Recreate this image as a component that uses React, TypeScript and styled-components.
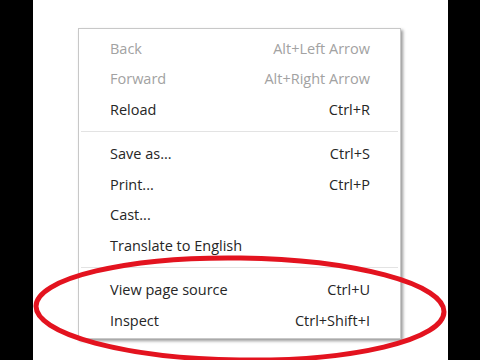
import styled, { createGlobalStyle } from "styled-components";

const GlobalStyle = createGlobalStyle`
  html, body {
    margin: 0;
    padding: 0;
    background: #000;
  }
  body {
    font-family: "Open Sans", "Noto Sans", Arial, sans-serif;
  }
`;

const Frame = styled.div`
  display: flex;
  width: 480px;
  height: 360px;
  background: #000;
`;

const Screen = styled.div`
  position: relative;
  margin-left: 33px;
  width: 415px;
  height: 360px;
  background: #fff;
  overflow: hidden;
`;

const Menu = styled.div`
  margin: 28px 0 0 45px;
  width: 321px;
  padding: 4px 0 2px;
  background: #fff;
  border: 1px solid #c8c8c8;
  box-shadow: 2px 2px 3px rgba(0, 0, 0, 0.4);
  display: flex;
  flex-direction: column;
`;

const Row = styled.div<{ $disabled?: boolean }>`
  display: flex;
  align-items: center;
  justify-content: space-between;
  height: 30.5px;
  padding: 0 30px 0 31px;
  font-size: 14.5px;
  color: ${(p) => (p.$disabled ? "#a2a2a2" : "#262626")};
`;

const Shortcut = styled.span`
  white-space: nowrap;
`;

const Separator = styled.div`
  height: 14px;
  display: flex;
  align-items: center;
  &::after {
    content: "";
    flex: 1;
    height: 1px;
    margin: 0 2px;
    background: #e3e3e3;
  }
`;

const Annotation = styled.svg`
  position: absolute;
  left: 0;
  top: 0;
  pointer-events: none;
`;

type Item = { label: string; keys?: string; disabled?: boolean } | "sep";

const items: Item[] = [
  { label: "Back", keys: "Alt+Left Arrow", disabled: true },
  { label: "Forward", keys: "Alt+Right Arrow", disabled: true },
  { label: "Reload", keys: "Ctrl+R" },
  "sep",
  { label: "Save as...", keys: "Ctrl+S" },
  { label: "Print...", keys: "Ctrl+P" },
  { label: "Cast..." },
  { label: "Translate to English" },
  "sep",
  { label: "View page source", keys: "Ctrl+U" },
  { label: "Inspect", keys: "Ctrl+Shift+I" },
];

export default function App() {
  return (
    <>
      <GlobalStyle />
      <Frame>
        <Screen>
          <Menu>
            {items.map((it, i) =>
              it === "sep" ? (
                <Separator key={i} />
              ) : (
                <Row key={i} $disabled={it.disabled}>
                  <span>{it.label}</span>
                  {it.keys && <Shortcut>{it.keys}</Shortcut>}
                </Row>
              )
            )}
          </Menu>
          <Annotation width="415" height="360" viewBox="0 0 415 360">
            <ellipse
              cx="207"
              cy="309"
              rx="204"
              ry="51"
              fill="none"
              stroke="#e3131f"
              strokeWidth="5"
              transform="rotate(0.8 207 309)"
            />
          </Annotation>
        </Screen>
      </Frame>
    </>
  );
}
